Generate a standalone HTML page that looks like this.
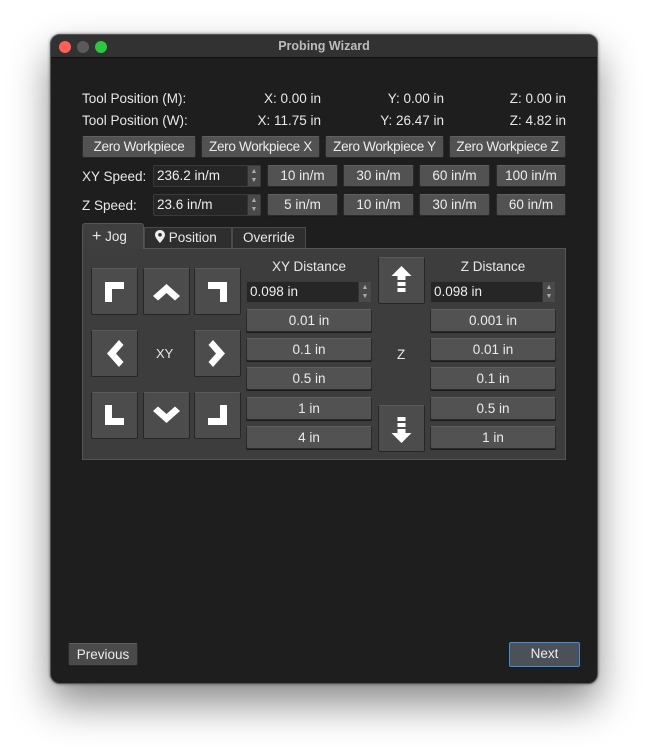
<!DOCTYPE html>
<html><head><meta charset="utf-8"><style>
*{box-sizing:border-box;margin:0;padding:0}
body{width:648px;height:750px;background:#fff;position:relative;font-family:"Liberation Sans",sans-serif;color:#e8e8e8;font-size:13.5px;overflow:hidden}
.win{position:absolute;left:50px;top:34px;width:548px;height:650px;background:#1e1e1e;border-radius:10px;border:1px solid #555;box-shadow:0 20px 40px rgba(0,0,0,.45),0 0 3px rgba(0,0,0,.5);overflow:hidden}
.title{position:absolute;left:0;top:0;width:100%;height:23px;background:#323232;border-bottom:1px solid #111;text-align:center;line-height:23px;font-weight:bold;font-size:12.5px;color:#bdbdbd}
.dot{position:absolute;top:6px;width:12px;height:12px;border-radius:50%}
.a{position:absolute;white-space:nowrap}
.b{position:absolute;background:#525252;border:1px solid #2a2a2a;border-top-color:#606060;border-radius:2px;text-align:center;color:#ececec;white-space:nowrap;box-shadow:0 1px 0 #1a1a1a}
.z{letter-spacing:-0.3px}
.sp{position:absolute;background:#262626;border:1px solid #3a3a3a;border-radius:2px;padding-left:3px;color:#eee}
.sp i{position:absolute;right:0;top:0;bottom:0;width:13px;background:#4a4a4a;border-left:1px solid #333;font-style:normal;font-size:7px;line-height:9px;text-align:center;color:#aaa;padding-top:1px}
.ic{position:absolute;width:47px;height:47px;background:#4c4c4c;border:1px solid #262626;border-top-color:#5a5a5a;border-radius:2px}
.ic svg{width:45px;height:45px}
</style></head><body>
<div class="win">
<div class="title">Probing Wizard</div>
<div class="dot" style="left:8px;background:#fe5f57"></div>
<div class="dot" style="left:26px;background:#5a5a5a"></div>
<div class="dot" style="left:44px;background:#2bc840"></div>
</div>
<div class="a" style="left:82px;top:91px">Tool Position (M):</div>
<div class="a" style="left:82px;top:113px">Tool Position (W):</div>
<div class="a" style="right:327px;top:91px">X: 0.00 in</div>
<div class="a" style="right:204px;top:91px">Y: 0.00 in</div>
<div class="a" style="right:82px;top:91px">Z: 0.00 in</div>
<div class="a" style="right:327px;top:113px">X: 11.75 in</div>
<div class="a" style="right:204px;top:113px">Y: 26.47 in</div>
<div class="a" style="right:82px;top:113px">Z: 4.82 in</div>

<div class="b z" style="left:82px;top:136px;width:114px;height:22px;line-height:20px">Zero Workpiece</div>
<div class="b z" style="left:201px;top:136px;width:119px;height:22px;line-height:20px">Zero Workpiece X</div>
<div class="b z" style="left:325px;top:136px;width:119px;height:22px;line-height:20px">Zero Workpiece Y</div>
<div class="b z" style="left:449px;top:136px;width:117px;height:22px;line-height:20px">Zero Workpiece Z</div>

<div class="a" style="left:82px;top:169px">XY Speed:</div>
<div class="sp" style="left:153px;top:165px;width:108px;height:22px;line-height:20px">236.2 in/m<i>▲<br>▼</i></div>
<div class="b" style="left:267px;top:165px;width:71px;height:22px;line-height:20px">10 in/m</div>
<div class="b" style="left:343px;top:165px;width:71px;height:22px;line-height:20px">30 in/m</div>
<div class="b" style="left:419px;top:165px;width:71px;height:22px;line-height:20px">60 in/m</div>
<div class="b" style="left:496px;top:165px;width:70px;height:22px;line-height:20px">100 in/m</div>

<div class="a" style="left:82px;top:198px">Z Speed:</div>
<div class="sp" style="left:153px;top:194px;width:108px;height:22px;line-height:20px">23.6 in/m<i>▲<br>▼</i></div>
<div class="b" style="left:267px;top:194px;width:71px;height:22px;line-height:20px">5 in/m</div>
<div class="b" style="left:343px;top:194px;width:71px;height:22px;line-height:20px">10 in/m</div>
<div class="b" style="left:419px;top:194px;width:71px;height:22px;line-height:20px">30 in/m</div>
<div class="b" style="left:496px;top:194px;width:70px;height:22px;line-height:20px">60 in/m</div>

<div class="a" style="left:82px;top:223px;width:62px;height:26px;background:#3f3f3f;border:1px solid #555;border-bottom:none;border-radius:3px 3px 0 0;line-height:25px;padding-left:9px;z-index:2"><span style="font-size:16px">+</span> Jog</div>
<div class="a" style="left:144px;top:227px;width:88px;height:21px;background:#2e2e2e;border:1px solid #4a4a4a;border-bottom:none;line-height:20px;padding-left:10px"><svg width="10" height="13" viewBox="0 0 10 13" style="vertical-align:-1px"><path d="M5 0C2.2 0 0 2.2 0 4.8 0 8 5 13 5 13s5-5 5-8.2C10 2.2 7.8 0 5 0zm0 6.6a1.8 1.8 0 1 1 0-3.6 1.8 1.8 0 0 1 0 3.6z" fill="#eee"/></svg> Position</div>
<div class="a" style="left:232px;top:227px;width:74px;height:21px;background:#2e2e2e;border:1px solid #4a4a4a;border-bottom:none;line-height:20px;padding-left:10px">Override</div>
<div class="a" style="left:82px;top:248px;width:484px;height:212px;background:#3d3d3d;border:1px solid #555"></div>

<div class="ic" style="left:91px;top:268px"><svg viewBox="0 0 45 45"><path d="M13 13h19v7h-12v13h-7z" fill="#fff"/></svg></div>
<div class="ic" style="left:143px;top:268px"><svg viewBox="0 0 45 45"><path d="M9 27l13.5-12 13.5 12-5 4.5-8.5-7.5-8.5 7.5z" fill="#fff"/></svg></div>
<div class="ic" style="left:194px;top:268px"><svg viewBox="0 0 45 45"><path d="M13 13h19v20h-7v-13h-12z" fill="#fff"/></svg></div>
<div class="ic" style="left:91px;top:330px"><svg viewBox="0 0 45 45"><path d="M27 9l-12 13.5 12 13.5 4.5-5-7.5-8.5 7.5-8.5z" fill="#fff"/></svg></div>
<div class="a" style="left:156px;top:346px;font-size:13px">XY</div>
<div class="ic" style="left:194px;top:330px"><svg viewBox="0 0 45 45"><path d="M18 9l12 13.5-12 13.5-4.5-5 7.5-8.5-7.5-8.5z" fill="#fff"/></svg></div>
<div class="ic" style="left:91px;top:392px"><svg viewBox="0 0 45 45"><path d="M13 12h7v13h12v7h-19z" fill="#fff"/></svg></div>
<div class="ic" style="left:143px;top:392px"><svg viewBox="0 0 45 45"><path d="M9 18l13.5 12 13.5-12-5-4.5-8.5 7.5-8.5-7.5z" fill="#fff"/></svg></div>
<div class="ic" style="left:194px;top:392px"><svg viewBox="0 0 45 45"><path d="M25 12h7v20h-19v-7h12z" fill="#fff"/></svg></div>

<div class="a" style="left:246px;top:259px;width:126px;text-align:center">XY Distance</div>
<div class="sp" style="left:246px;top:281px;width:126px;height:22px;line-height:20px">0.098 in<i>▲<br>▼</i></div>
<div class="b" style="left:246px;top:309px;width:126px;height:23px;line-height:21px">0.01 in</div>
<div class="b" style="left:246px;top:338px;width:126px;height:23px;line-height:21px">0.1 in</div>
<div class="b" style="left:246px;top:367px;width:126px;height:23px;line-height:21px">0.5 in</div>
<div class="b" style="left:246px;top:397px;width:126px;height:23px;line-height:21px">1 in</div>
<div class="b" style="left:246px;top:426px;width:126px;height:23px;line-height:21px">4 in</div>

<div class="ic" style="left:378px;top:257px"><svg viewBox="0 0 45 45"><path d="M22.5 8l-10 10h6v4h8v-4h6z M18.5 24h8v4h-8z M18.5 30h8v4h-8z" fill="#fff"/></svg></div>
<div class="a" style="left:397px;top:347px">Z</div>
<div class="ic" style="left:378px;top:405px"><svg viewBox="0 0 45 45"><path d="M22.5 37l-10-10h6v-4h8v4h6z M18.5 21h8v-4h-8z M18.5 15h8v-4h-8z" fill="#fff"/></svg></div>

<div class="a" style="left:430px;top:259px;width:126px;text-align:center">Z Distance</div>
<div class="sp" style="left:430px;top:281px;width:126px;height:22px;line-height:20px">0.098 in<i>▲<br>▼</i></div>
<div class="b" style="left:430px;top:309px;width:126px;height:23px;line-height:21px">0.001 in</div>
<div class="b" style="left:430px;top:338px;width:126px;height:23px;line-height:21px">0.01 in</div>
<div class="b" style="left:430px;top:367px;width:126px;height:23px;line-height:21px">0.1 in</div>
<div class="b" style="left:430px;top:397px;width:126px;height:23px;line-height:21px">0.5 in</div>
<div class="b" style="left:430px;top:426px;width:126px;height:23px;line-height:21px">1 in</div>

<div class="b" style="left:68px;top:643px;width:70px;height:23px;line-height:21px;background:#4a4a4a">Previous</div>
<div class="b" style="left:509px;top:642px;width:71px;height:25px;line-height:22px;background:#4c5058;border:1.5px solid #3d8fe0">Next</div>
</body></html>
